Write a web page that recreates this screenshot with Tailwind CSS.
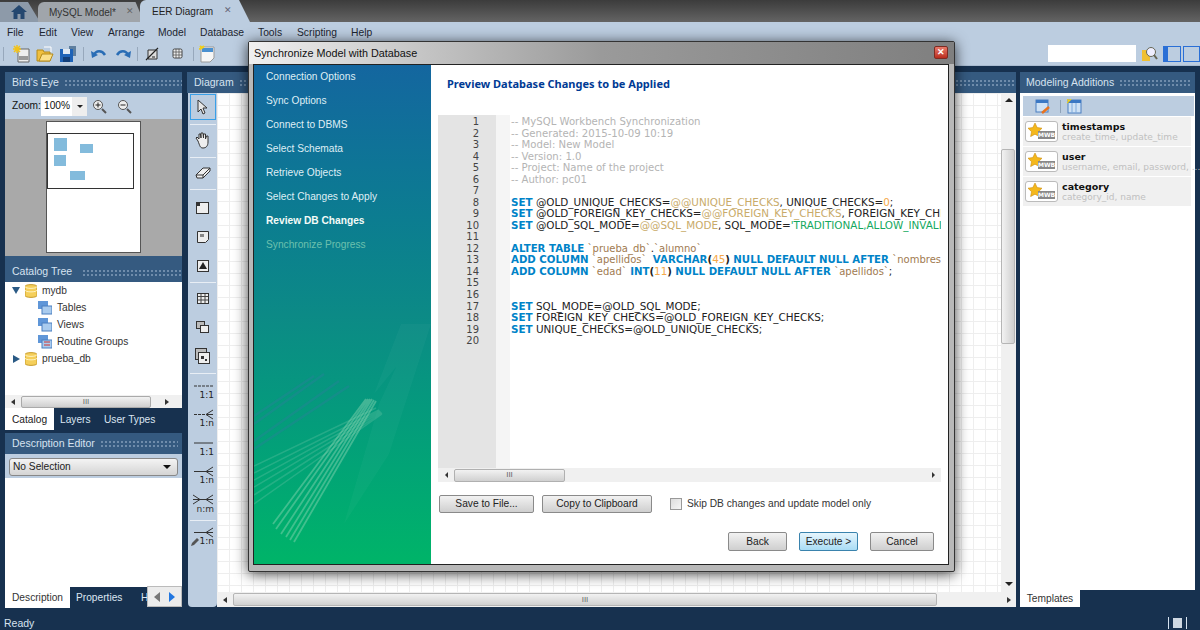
<!DOCTYPE html>
<html lang="en">
<head>
<meta charset="UTF-8">
<title>MySQL Workbench</title>
<script src="https://cdn.jsdelivr.net/npm/@tailwindcss/browser@4"></script>
</head>
<body class="w-[1200px] h-[630px] overflow-hidden bg-[#17314f] font-['Liberation_Sans',sans-serif] text-[10.200px] text-[#222]">

<!-- Document tabs -->
<div class="h-[22px] flex items-end bg-gradient-to-b from-[#3c3c3c] to-[#646464]">
  <div class="w-[40px] h-[20px] bg-[#8d9aa9] flex items-center pl-[11px] [clip-path:polygon(0_0,70%_0,100%_100%,0_100%)]">
    <svg width="16" height="14" viewBox="0 0 16 14"><path d="M8 0 0 7h2.500v7h4V9h3v5h4V7H16z" fill="#24476f"/></svg>
  </div>
  <div class="w-[106px] -ml-[2px] h-[20px] bg-[#a0a5ab] flex items-center pl-[11px] text-[10px] text-[#333] [clip-path:polygon(0_0,92%_0,100%_100%,0_100%)] rounded-tl-[6px]">
    <span class="w-[77px] whitespace-nowrap">MySQL Model*</span><span class="text-[#666] text-[9px]">✕</span>
  </div>
  <div class="w-[110px] -ml-[4px] h-[22px] bg-[#bccde0] flex items-center pl-[12px] text-[10px] text-[#222] [clip-path:polygon(0_0,90%_0,100%_100%,0_100%)] rounded-tl-[6px]">
    <span class="w-[72px] whitespace-nowrap">EER Diagram</span><span class="text-[#667] text-[9px]">✕</span>
  </div>
</div>

<!-- Menu bar -->
<div class="h-[20px] pt-px bg-[#bccde0] flex items-center pl-[7px] text-[10.300px] text-[#1c2530]">
  <span class="w-[32px]">File</span>
  <span class="w-[32px]">Edit</span>
  <span class="w-[37px]">View</span>
  <span class="w-[50px]">Arrange</span>
  <span class="w-[42px]">Model</span>
  <span class="w-[58px]">Database</span>
  <span class="w-[39px]">Tools</span>
  <span class="w-[54px]">Scripting</span>
  <span>Help</span>
</div>

<!-- Toolbar -->
<div class="h-[24px] bg-[#bccde0] flex items-center border-b border-[#a9bbd0] relative">
  <div class="ml-[3px] w-px h-[14px] bg-[#97a8bc]"></div>
  <svg class="ml-[9px]" width="18" height="18" viewBox="0 0 18 18"><path d="M5 4h11v13H5z" fill="#eee" stroke="#666"/><rect x="6" y="11" width="9" height="4" fill="#999"/><path d="M4 0v8M0 4h8M1 1l6 6M7 1 1 7" stroke="#f3c318" stroke-width="1.500"/></svg>
  <svg class="ml-[5px]" width="18" height="18" viewBox="0 0 18 18"><path d="M1 5h6l1 2h6v9H1z" fill="#f0c040" stroke="#b48a1a"/><path d="M3 16l3-7h11l-3 7z" fill="#fbe08a" stroke="#b48a1a"/><path d="M8 2h7v5" stroke="#fff" fill="none"/></svg>
  <svg class="ml-[5px]" width="18" height="18" viewBox="0 0 18 18"><path d="M1 4h13v13H1z" fill="#1e63b8"/><rect x="4" y="4" width="7" height="5" fill="#dfe9f4"/><rect x="4" y="12" width="7" height="5" fill="#123f7a"/><path d="M10 1h7v10h-3V4h-4z" fill="#5f7f9f"/></svg>
  <div class="ml-[6px] w-px h-[14px] bg-[#97a8bc]"></div>
  <svg class="ml-[7px]" width="16" height="14" viewBox="0 0 16 14"><path d="M3 8C5 3 11 3 14 8" fill="none" stroke="#2a6db5" stroke-width="2.500"/><path d="M0 4l1 7 6-3z" fill="#2a6db5"/></svg>
  <svg class="ml-[8px]" width="16" height="14" viewBox="0 0 16 14"><path d="M13 8C11 3 5 3 2 8" fill="none" stroke="#2a6db5" stroke-width="2.500"/><path d="M16 4l-1 7-6-3z" fill="#2a6db5"/></svg>
  <div class="ml-[6px] w-px h-[14px] bg-[#97a8bc]"></div>
  <svg class="ml-[7px]" width="14" height="14" viewBox="0 0 14 14"><path d="M3 3h9v9H3z" fill="#ddd" stroke="#333"/><path d="M1 13 13 1M7 10h3" stroke="#222" stroke-width="1.200"/></svg>
  <svg class="ml-[13px]" width="11" height="11" viewBox="0 0 11 11"><rect x="1" y="1" width="9" height="9" rx="1.500" fill="#eee" stroke="#444"/><path d="M4 1v9M7 1v9M1 4h9M1 7h9" stroke="#555" stroke-width=".8"/></svg>
  <div class="ml-[10px] w-px h-[14px] bg-[#97a8bc]"></div>
  <svg class="ml-[5px]" width="16" height="18" viewBox="0 0 16 18"><path d="M2 2h13v11l-4 4H2z" fill="#f6f6f6" stroke="#999"/><rect x="3" y="3" width="11" height="4" fill="#4a90d0"/><path d="M3 3 1 1M3 3l2-2M3 3 0 4" stroke="#f3d018" stroke-width="2"/></svg>
  <div class="ml-auto flex items-center">
    <div class="w-[88px] h-[17px] bg-white"></div>
    <svg class="ml-[6px]" width="16" height="16" viewBox="0 0 16 16"><path d="M0 4h8v11H0z" fill="#f0c030"/><circle cx="9" cy="6" r="4.500" fill="#eef" stroke="#665"/><path d="M12 9l3 4" stroke="#665" stroke-width="2"/></svg>
    <div class="ml-[5px] w-[18px] h-[16px] border border-[#2a6fd6] border-l-[5px]"></div>
    <div class="ml-[2px] w-[17px] h-[16px] border border-[#2a6fd6]"></div>
  </div>
</div>

<!-- Workspace -->
<div class="h-[542px] flex pt-[6px]">

  <!-- Left column -->
  <div class="ml-[5px] w-[177px] flex flex-col">
    <div class="h-[21px] bg-[#355a80] flex items-center pl-[7px] gap-[5px] text-[10.500px] text-[#d7e3f0]">
      <span>Bird's Eye</span>
      <div class="flex-1 h-[7px] bg-[radial-gradient(#6f8cab_1px,transparent_1px)] bg-size-[4px_4px]"></div>
    </div>
    <div class="h-[26px] bg-[#bccde0] flex items-center pl-[7px] text-[#111]">
      <span class="w-[29px]">Zoom:</span>
      <div class="w-[46px] h-[19px] bg-white flex items-center pl-[3px] justify-between">
        <span>100%</span>
        <div class="w-[15px] h-full bg-[#eee] flex items-center justify-center"><div class="border-x-[3px] border-t-[3px] border-x-transparent border-t-[#222]"></div></div>
      </div>
      <svg class="ml-[5px]" width="15" height="15" viewBox="0 0 15 15"><circle cx="6" cy="6" r="4.500" fill="#eee" stroke="#555"/><path d="M10 10l4 4" stroke="#555" stroke-width="2"/><path d="M3.500 6h5M6 3.500v5" stroke="#222"/></svg>
      <svg class="ml-[10px]" width="15" height="15" viewBox="0 0 15 15"><circle cx="6" cy="6" r="4.500" fill="#eee" stroke="#555"/><path d="M10 10l4 4" stroke="#555" stroke-width="2"/><path d="M3.500 6h5" stroke="#222"/></svg>
    </div>
    <div class="h-[137px] bg-[#a9a9a9] flex justify-center pt-[2px]">
      <div class="relative w-[95px] h-[132px] bg-white border border-[#555]">
        <div class="absolute left-0 top-[11px] w-[87px] h-[56px] border border-[#333]"></div>
        <div class="absolute left-[7px] top-[16px] w-[13px] h-[13px] bg-[#83bbdc]"></div>
        <div class="absolute left-[33px] top-[22px] w-[13px] h-[9px] bg-[#83bbdc]"></div>
        <div class="absolute left-[7px] top-[33px] w-[12px] h-[11px] bg-[#83bbdc]"></div>
        <div class="absolute left-[23px] top-[49px] w-[15px] h-[9px] bg-[#83bbdc]"></div>
      </div>
    </div>
    <div class="h-[26px] bg-[#355a80] flex items-center pl-[7px] pt-[6px] gap-[10px] text-[10.500px] text-[#d7e3f0]">
      <span>Catalog Tree</span>
      <div class="flex-1 h-[7px] bg-[radial-gradient(#6f8cab_1px,transparent_1px)] bg-size-[4px_4px]"></div>
    </div>
    <!-- Tree -->
    <div class="h-[113px] bg-white text-[#333]">
      <div class="h-[17px] flex items-center pl-[7px]">
        <div class="border-x-[4px] border-t-[7px] border-x-transparent border-t-[#2a5a85]"></div>
        <svg class="ml-[5px]" width="12" height="14" viewBox="0 0 12 14"><path d="M0 2.500C0 0 12 0 12 2.500v9c0 2.500-12 2.500-12 0z" fill="#f5cf5a" stroke="#c79b2a"/><path d="M0 2.500c0 2.500 12 2.500 12 0M0 6c0 2.500 12 2.500 12 0" fill="none" stroke="#fff3c0"/></svg>
        <span class="ml-[5px]">mydb</span>
      </div>
      <div class="h-[17px] flex items-center pl-[33px]">
        <svg width="14" height="14" viewBox="0 0 14 14"><rect x="0" y="0" width="10" height="8" fill="#5f96d8"/><rect x="4" y="5" width="10" height="8" fill="#a9cbee" stroke="#4a7fc0"/></svg>
        <span class="ml-[5px]">Tables</span>
      </div>
      <div class="h-[17px] flex items-center pl-[33px]">
        <svg width="14" height="14" viewBox="0 0 14 14"><rect x="0" y="0" width="10" height="8" fill="#5f96d8"/><rect x="4" y="5" width="10" height="8" fill="#a9cbee" stroke="#4a7fc0"/></svg>
        <span class="ml-[5px]">Views</span>
      </div>
      <div class="h-[17px] flex items-center pl-[33px]">
        <svg width="14" height="14" viewBox="0 0 14 14"><rect x="0" y="0" width="10" height="8" fill="#5f96d8"/><rect x="4" y="5" width="10" height="8" fill="#a9cbee" stroke="#4a7fc0"/><path d="M6 7h6M6 10h6" stroke="#c33"/></svg>
        <span class="ml-[5px]">Routine Groups</span>
      </div>
      <div class="h-[17px] flex items-center pl-[8px]">
        <div class="border-y-[4px] border-l-[7px] border-y-transparent border-l-[#2a5a85]"></div>
        <svg class="ml-[5px]" width="12" height="14" viewBox="0 0 12 14"><path d="M0 2.500C0 0 12 0 12 2.500v9c0 2.500-12 2.500-12 0z" fill="#f5cf5a" stroke="#c79b2a"/><path d="M0 2.500c0 2.500 12 2.500 12 0M0 6c0 2.500 12 2.500 12 0" fill="none" stroke="#fff3c0"/></svg>
        <span class="ml-[5px]">prueba_db</span>
      </div>
    </div>
    <div class="h-[13px] bg-[#f0f0f0] flex items-center">
      <div class="w-[16px] flex justify-center"><div class="border-y-[3px] border-r-[4px] border-y-transparent border-r-[#333]"></div></div>
      <div class="w-[130px] h-[12px] bg-gradient-to-b from-[#f2f2f2] to-[#cfcfcf] border border-[#aaa] rounded-[2px] flex items-center justify-center text-[8px] leading-none text-[#666]">III</div>
      <div class="flex-1 flex justify-center"><div class="border-y-[3px] border-l-[4px] border-y-transparent border-l-[#333]"></div></div>
    </div>
    <div class="h-[22px] flex items-center text-[#dbe6f2]">
      <span class="h-full w-[49px] pt-px bg-white text-[#222] flex items-center justify-center">Catalog</span>
      <span class="ml-[6px] w-[44px] pt-px">Layers</span>
      <span class="pt-px">User Types</span>
    </div>
    <div class="mt-[3px] h-[21px] bg-[#355a80] flex items-center pl-[7px] pr-[4px] gap-[5px] text-[10.500px] text-[#d7e3f0]">
      <span>Description Editor</span>
      <div class="flex-1 h-[7px] bg-[radial-gradient(#6f8cab_1px,transparent_1px)] bg-size-[4px_4px]"></div>
    </div>
    <div class="h-[24px] bg-[#bccde0] px-[4px] pt-[4px]">
      <div class="h-[18px] rounded-[3px] border border-[#888] bg-gradient-to-b from-[#f4f4f4] to-[#d4d4d4] flex items-center justify-between pl-[3px] pr-[6px] text-[#222]">
        <span>No Selection</span>
        <div class="border-x-[4px] border-t-[4px] border-x-transparent border-t-[#111]"></div>
      </div>
    </div>
    <div class="h-[109px] bg-white"></div>
    <div class="h-[21px] flex items-stretch relative text-[#dbe6f2]">
      <span class="w-[65px] bg-white text-[#333] flex items-center justify-center">Description</span>
      <span class="ml-[6px] w-[65px] flex items-center">Properties</span>
      <span class="flex items-center">H</span>
      <div class="absolute left-[142px] top-[-1px] w-[35px] h-[21px] bg-[#ececec] border border-[#bbb] flex items-center justify-center gap-[9px]">
        <div class="border-y-[5px] border-r-[6px] border-y-transparent border-r-[#777]"></div>
        <div class="border-y-[5px] border-l-[6px] border-y-transparent border-l-[#2277e0]"></div>
      </div>
    </div>
  </div>

  <!-- Diagram column -->
  <div class="ml-[5px] w-[829px] flex flex-col">
    <div class="h-[21px] bg-[#355a80] flex items-center pl-[7px] gap-[5px] text-[10.500px] text-[#d7e3f0]">
      <span>Diagram</span>
      <div class="flex-1 h-[7px] bg-[radial-gradient(#6f8cab_1px,transparent_1px)] bg-size-[4px_4px]"></div>
    </div>
    <div class="flex-1 flex">
      <!-- Tool strip -->
      <div class="w-[29px] h-[514px] ml-px bg-[#bccde0] rounded-b-[4px] flex flex-col items-center text-[9px] leading-[9px] font-['DejaVu_Sans',sans-serif] text-[#222]">
        <div class="mt-[1px] w-[26px] h-[26px] border border-[#3aa0e8] flex items-center justify-center">
          <svg width="12" height="16" viewBox="0 0 12 16"><path d="M1 1v12l3-3 2 5 2-1-2-5h4z" fill="#e8e8e8" stroke="#333"/></svg>
        </div>
        <div class="mt-[4px] w-[26px] h-[1px] bg-[#e8eef5]"></div>
        <svg class="mt-[7px]" width="16" height="18" viewBox="0 0 16 18"><path d="M3 9 1 6l1-1 2 2V2h1.500l.5 4V1h2l.5 5V2h2v5l1-3h1.500v6c0 4-2 6-5 6S5 14 3 9z" fill="#eee" stroke="#333"/></svg>
        <div class="mt-[7px] w-[26px] h-[1px] bg-[#e8eef5]"></div>
        <svg class="mt-[9px]" width="16" height="12" viewBox="0 0 16 12"><path d="M1 8 8 1h7v3l-7 7H2z" fill="#eee" stroke="#333"/><path d="M1 8h7l7-7M8 8v3" stroke="#333" fill="none"/></svg>
        <div class="mt-[10px] w-[26px] h-[1px] bg-[#e8eef5]"></div>
        <svg class="mt-[12px]" width="13" height="12" viewBox="0 0 13 12"><rect x=".5" y=".5" width="12" height="11" fill="#eee" stroke="#333"/><path d="M1 1h3v3H1z" fill="#333"/></svg>
        <svg class="mt-[17px]" width="12" height="12" viewBox="0 0 12 12"><path d="M.5.5h11v8l-3 3h-8z" fill="#eee" stroke="#333"/><path d="M4 3v3M6 3v3" stroke="#222"/></svg>
        <svg class="mt-[17px]" width="12" height="12" viewBox="0 0 12 12"><rect x=".5" y=".5" width="11" height="11" fill="#eee" stroke="#333"/><path d="M2 9l4-7 4 7z" fill="#222"/></svg>
        <div class="mt-[10px] w-[26px] h-[1px] bg-[#e8eef5]"></div>
        <svg class="mt-[10px]" width="12" height="11" viewBox="0 0 12 11"><rect x=".5" y=".5" width="11" height="10" fill="#eee" stroke="#333"/><path d="M1 3.500h10M1 7h10M4 1v9M8 1v9" stroke="#444"/></svg>
        <svg class="mt-[17px]" width="13" height="12" viewBox="0 0 13 12"><rect x=".5" y=".5" width="8" height="7" fill="#bbb" stroke="#333"/><rect x="4.500" y="4.500" width="8" height="7" fill="#eee" stroke="#333"/></svg>
        <svg class="mt-[15px]" width="15" height="16" viewBox="0 0 15 16"><rect x=".5" y=".5" width="11" height="11" fill="#bbb" stroke="#333"/><rect x="3.500" y="4.500" width="11" height="11" fill="#eee" stroke="#333"/><path d="M6 8h3v3H6zM10 11h2v2h-2z" fill="#333"/></svg>
        <div class="mt-[9px] w-[26px] h-[1px] bg-[#e8eef5]"></div>
        <!-- Relationship tools -->
        <svg class="mt-[11px]" width="22" height="3" viewBox="0 0 22 3"><path d="M2 1h19" stroke="#333" stroke-dasharray="3 1"/></svg>
        <span class="self-end mr-[3px] mt-[3px]">1:1</span>
        <svg class="mt-[9px]" width="22" height="11" viewBox="0 0 22 11"><path d="M2 5.500h12" stroke="#333" stroke-dasharray="3 1"/><path d="M14 5.500 21 1M14 5.500H21M14 5.500l7 4.500" stroke="#333" fill="none"/></svg>
        <span class="self-end mr-[3px] -mt-[1px]">1:n</span>
        <svg class="mt-[14px]" width="22" height="2" viewBox="0 0 22 2"><path d="M2 1h19" stroke="#333"/></svg>
        <span class="self-end mr-[3px] mt-[4px]">1:1</span>
        <svg class="mt-[9px]" width="22" height="11" viewBox="0 0 22 11"><path d="M2 5.500h12" stroke="#333"/><path d="M14 5.500 21 1M14 5.500H21M14 5.500l7 4.500" stroke="#333" fill="none"/></svg>
        <span class="self-end mr-[3px] -mt-[1px]">1:n</span>
        <svg class="mt-[9px]" width="22" height="11" viewBox="0 0 22 11"><path d="M8 5.500h6M1 1l7 4.500L1 10M14 5.500 21 1M14 5.500l7 4.500M1 5.500h7M14 5.500h7" stroke="#333" fill="none"/></svg>
        <span class="self-end mr-[3px] text-[#333]">n:m</span>
        <div class="mt-[6px] w-[26px] h-[1px] bg-[#e8eef5]"></div>
        <svg class="mt-[6px]" width="22" height="11" viewBox="0 0 22 11"><path d="M2 5.500h12" stroke="#333"/><path d="M14 5.500 21 1M14 5.500H21M14 5.500l7 4.500" stroke="#333" fill="none"/></svg>
        <div class="self-stretch flex items-center justify-end pr-[3px] -mt-[1px]">
          <svg width="9" height="9" viewBox="0 0 9 9"><path d="M0 9l1-3 5-5 2 2-5 5z" fill="#555"/></svg>
          <span>1:n</span>
        </div>
      </div>
      <!-- Canvas -->
      <div class="flex-1 flex flex-col">
        <div class="h-[499px] flex">
          <div class="flex-1 bg-white bg-[linear-gradient(#eeeeee_1px,transparent_1px),linear-gradient(90deg,#eeeeee_1px,transparent_1px)] bg-size-[12px_12px]"></div>
          <div class="w-[15px] bg-[#f0f0f0] relative">
            <div class="absolute left-[4px] top-[5px] border-x-[4px] border-b-[4px] border-x-transparent border-b-[#222]"></div>
            <div class="absolute left-0 top-[56px] w-[14px] h-[195px] bg-gradient-to-r from-[#f2f2f2] to-[#cfcfcf] border border-[#b5b5b5] rounded-[2px]"></div>
            <div class="absolute left-[4px] top-[489px] border-x-[4px] border-t-[4px] border-x-transparent border-t-[#222]"></div>
          </div>
        </div>
        <div class="h-[15px] bg-[#f0f0f0] flex items-center">
          <div class="w-[16px] flex justify-center"><div class="border-y-[3px] border-r-[4px] border-y-transparent border-r-[#333]"></div></div>
          <div class="w-[704px] h-[13px] bg-gradient-to-b from-[#f2f2f2] to-[#d0d0d0] border border-[#b5b5b5] rounded-[2px] flex items-center justify-center text-[8px] leading-none text-[#666]">III</div>
          <div class="ml-auto w-[14px] flex justify-center"><div class="border-y-[3px] border-l-[4px] border-y-transparent border-l-[#333]"></div></div>
        </div>
      </div>
    </div>
  </div>

  <!-- Right column -->
  <div class="ml-[4px] w-[175px] flex flex-col">
    <div class="h-[21px] bg-[#355a80] flex items-center pl-[6px] pr-[4px] gap-[5px] text-[10.500px] text-[#d7e3f0]">
      <span>Modeling Additions</span>
      <div class="flex-1 h-[7px] bg-[radial-gradient(#6f8cab_1px,transparent_1px)] bg-size-[4px_4px]"></div>
    </div>
    <div class="h-[497px] bg-white pt-[3px] pl-[3px] pr-[1px]">
      <div class="h-[20px] bg-[#bccde0] flex items-center pl-[12px]">
        <svg width="16" height="15" viewBox="0 0 16 15"><rect x="1" y="1" width="12" height="12" fill="#cfe2f5" stroke="#4a7fc0"/><rect x="1" y="1" width="12" height="3" fill="#3b78c4"/><path d="M7 14l7-6" stroke="#e8731f" stroke-width="2.500"/></svg>
        <div class="ml-[9px] w-px h-[13px] bg-[#8fa3b9]"></div>
        <svg class="ml-[6px]" width="15" height="15" viewBox="0 0 15 15"><rect x="1" y="1" width="13" height="13" fill="#cfe2f5" stroke="#4a7fc0"/><rect x="1" y="1" width="13" height="3" fill="#3b78c4"/><path d="M5 4v10M9 4v10" stroke="#7faadb"/><path d="M2 2 0 0M2 2l2-2M2 2 0 4" stroke="#f3d018" stroke-width="1.500"/></svg>
      </div>
      <div class="mr-[3px] mt-[1px] h-[29px] bg-[#f0f0f0] flex items-center pl-[2px] mb-px">
        <div class="w-[33px] h-[21px] bg-white border border-[#bbb] rounded-[3px] relative shrink-0">
          <svg class="absolute left-[2px] top-[1px]" width="14" height="14" viewBox="0 0 24 24"><path d="M12 0l3.700 7.800 8.300 1.100-6 5.900 1.500 8.500L12 19.200 4.500 23.300 6 14.800 0 8.900l8.300-1.100z" fill="#f4b81c" stroke="#c98c10"/></svg>
          <span class="absolute right-[2px] bottom-[2px] w-[17px] h-[8px] bg-[#888] text-white text-[6px] leading-[8px] font-bold text-center font-['DejaVu_Sans',sans-serif]">MWB</span>
        </div>
        <div class="ml-[4px] flex flex-col leading-[10px] font-['DejaVu_Sans',sans-serif]">
          <span class="font-bold text-[9.500px] text-[#111]">timestamps</span>
          <span class="text-[9px] text-[#c0c0c0] whitespace-nowrap">create_time, update_time</span>
        </div>
      </div>
      <div class="mr-[3px] h-[29px] bg-[#f0f0f0] flex items-center pl-[2px] mb-px">
        <div class="w-[33px] h-[21px] bg-white border border-[#bbb] rounded-[3px] relative shrink-0">
          <svg class="absolute left-[2px] top-[1px]" width="14" height="14" viewBox="0 0 24 24"><path d="M12 0l3.700 7.800 8.300 1.100-6 5.900 1.500 8.500L12 19.200 4.500 23.300 6 14.800 0 8.900l8.300-1.100z" fill="#f4b81c" stroke="#c98c10"/></svg>
          <span class="absolute right-[2px] bottom-[2px] w-[17px] h-[8px] bg-[#888] text-white text-[6px] leading-[8px] font-bold text-center font-['DejaVu_Sans',sans-serif]">MWB</span>
        </div>
        <div class="ml-[4px] flex flex-col leading-[10px] font-['DejaVu_Sans',sans-serif]">
          <span class="font-bold text-[9.500px] text-[#111]">user</span>
          <span class="text-[9px] text-[#c0c0c0] whitespace-nowrap">username, email, password, ...</span>
        </div>
      </div>
      <div class="mr-[3px] h-[29px] bg-[#f0f0f0] flex items-center pl-[2px]">
        <div class="w-[33px] h-[21px] bg-white border border-[#bbb] rounded-[3px] relative shrink-0">
          <svg class="absolute left-[2px] top-[1px]" width="14" height="14" viewBox="0 0 24 24"><path d="M12 0l3.700 7.800 8.300 1.100-6 5.900 1.500 8.500L12 19.200 4.500 23.300 6 14.800 0 8.900l8.300-1.100z" fill="#f4b81c" stroke="#c98c10"/></svg>
          <span class="absolute right-[2px] bottom-[2px] w-[17px] h-[8px] bg-[#888] text-white text-[6px] leading-[8px] font-bold text-center font-['DejaVu_Sans',sans-serif]">MWB</span>
        </div>
        <div class="ml-[4px] flex flex-col leading-[10px] font-['DejaVu_Sans',sans-serif]">
          <span class="font-bold text-[9.500px] text-[#111]">category</span>
          <span class="text-[9px] text-[#c0c0c0] whitespace-nowrap">category_id, name</span>
        </div>
      </div>
    </div>
    <div class="h-[17px] w-[60px] pt-px bg-white text-[#333] flex items-center justify-center">Templates</div>
  </div>
</div>

<!-- Status bar -->
<div class="h-[22px] flex items-center pl-[4px] pt-[9px] text-[#d7e3f0] text-[10.500px] relative">
  <span>Ready</span>
  <div class="absolute left-[1168px] top-[9px] flex items-center gap-[4px]">
    <div class="w-px h-[12px] bg-[#d7e3f0]"></div>
    <div class="w-[9px] h-[10px] bg-[#cfd8e2]"></div>
    <div class="w-px h-[12px] bg-[#d7e3f0]"></div>
  </div>
</div>

<!-- Dialog -->
<div class="absolute left-[248px] top-[41px] w-[707px] h-[531px] flex flex-col bg-[#b8b8b8] border border-[#333] shadow-[0_2px_14px_rgba(0,0,0,0.75)] rounded-[2px] pl-[4px] pr-[5px] pb-[6px]">
  <div class="-ml-[4px] -mr-[5px] h-[22px] shrink-0 bg-gradient-to-r from-[#f0f0f0] via-[#9a9a9a] to-[#7f7f7f] flex items-center pl-[5px] text-[10.800px] text-[#111] relative">
    <span>Synchronize Model with Database</span>
    <div class="absolute right-[6px] top-[4px] w-[14px] h-[13px] rounded-[2px] bg-gradient-to-b from-[#e8796a] to-[#b92b1c] border border-[#7d2b22] flex items-center justify-center text-white text-[9px] leading-none font-bold">✕</div>
  </div>
  <div class="flex-1 flex border border-[#222] min-h-0 bg-white">
    <!-- Steps sidebar -->
    <div class="relative w-[177px] shrink-0 overflow-hidden bg-gradient-to-b from-[#14669f] via-[#0c8a86] via-50% to-[#00b468] text-[#dfeef5]">
      <svg class="absolute left-0 bottom-0" width="177" height="240" viewBox="0 0 177 240">
        <path d="M120 70 177 0h-30zM125 80 90 200l45-70 42-130h-15z" fill="#ffffff" opacity=".03"/>
        <path d="M0 117 85 57M0 125 95 62M0 100 70 50M0 92 60 52" stroke="#2a7f9a" stroke-width="2.500" opacity=".4" fill="none"/>
        <path d="M0 142 122 84M0 149 125 86M0 156 126 87M0 163 127 88M0 171 128 89M0 180 128 90" stroke="#64c2a2" stroke-width="1.500" opacity=".35" fill="none"/>
        <path d="M19 200 112 75M22 205 114 75M27 210 116 75M32 213 118 75M36 216 120 76M40 218 122 77" stroke="#8fd8b4" stroke-width="1.800" opacity=".45" fill="none"/>
      </svg>
      <div class="relative flex flex-col pl-[12px]">
        <span class="h-[24px] flex items-center">Connection Options</span>
        <span class="h-[24px] flex items-center">Sync Options</span>
        <span class="h-[24px] flex items-center">Connect to DBMS</span>
        <span class="h-[24px] flex items-center">Select Schemata</span>
        <span class="h-[24px] flex items-center">Retrieve Objects</span>
        <span class="h-[24px] flex items-center">Select Changes to Apply</span>
        <span class="h-[24px] flex items-center font-bold text-[#f4fbf8]">Review DB Changes</span>
        <span class="h-[24px] flex items-center text-[#6cc0ad]">Synchronize Progress</span>
      </div>
    </div>
    <!-- Page -->
    <div class="flex-1 min-w-0 flex flex-col pl-[7px] pr-[7px]">
      <h1 class="pl-[9px] pt-[11px] h-[50px] text-[#003a94] font-bold text-[11px] font-['Noto_Sans',sans-serif] shrink-0">Preview Database Changes to be Applied</h1>
      <div class="h-[353px] flex shrink-0 overflow-hidden">
        <div class="w-[58px] bg-[#e4e4e4] shrink-0 pt-px pr-[17px] text-right font-['DejaVu_Sans',sans-serif] text-[10px] leading-[11.530px] text-[#444]">
          1<br>2<br>3<br>4<br>5<br>6<br>7<br>8<br>9<br>10<br>11<br>12<br>13<br>14<br>15<br>16<br>17<br>18<br>19<br>20
        </div>
        <div class="w-[14px] bg-[#f5f5f5] shrink-0"></div>
        <pre class="flex-1 pl-px pt-px overflow-hidden font-['DejaVu_Sans',sans-serif] text-[10.400px] leading-[11.530px] text-[#222]"><span class="text-[#b4b4b4] text-[10.150px]">-- MySQL Workbench Synchronization
-- Generated: 2015-10-09 10:19
-- Model: New Model
-- Version: 1.0
-- Project: Name of the project
-- Author: pc01</span>

<b class="text-[#0083c8]">SET</b> @OLD_UNIQUE_CHECKS=<span class="text-[#c9ab6a]">@@UNIQUE_CHECKS</span>, UNIQUE_CHECKS=<span class="text-[#f5a94a]">0</span>;
<b class="text-[#0083c8]">SET</b> @OLD_FOREIGN_KEY_CHECKS=<span class="text-[#c9ab6a]">@@FOREIGN_KEY_CHECKS</span>, FOREIGN_KEY_CHECKS=0;
<b class="text-[#0083c8]">SET</b> @OLD_SQL_MODE=<span class="text-[#c9ab6a]">@@SQL_MODE</span>, SQL_MODE=<span class="text-[#14a860]">'TRADITIONAL,ALLOW_INVALID_DATES'</span>;

<b class="text-[#0083c8] text-[10.200px]">ALTER TABLE</b> <span class="text-[#a07a50] text-[10px]">`prueba_db`</span>.<span class="text-[#a07a50] text-[10px]">`alumno`</span>
<b class="text-[#0083c8] text-[10.200px]">ADD COLUMN</b> <span class="text-[#a07a50] text-[10px]">`apellidos`</span> <b class="ml-[3px] text-[#0083c8] text-[10.200px]">VARCHAR</b><b class="text-[10.200px]">(</b><span class="text-[#f5a94a]">45</span><b class="text-[10.200px]">)</b> <b class="text-[#0083c8] text-[10.200px]">NULL DEFAULT NULL AFTER</b> <span class="text-[#a07a50] text-[10px]">`nombres`</span>
<b class="text-[#0083c8] text-[10.200px]">ADD COLUMN</b> <span class="text-[#a07a50] text-[10px]">`edad`</span> <b class="text-[#0083c8] text-[10.200px]">INT</b><b class="text-[10.200px]">(</b><span class="text-[#f5a94a]">11</span><b class="text-[10.200px]">)</b> <b class="text-[#0083c8] text-[10.200px]">NULL DEFAULT NULL AFTER</b> <span class="text-[#a07a50] text-[10px]">`apellidos`</span>;


<b class="text-[#0083c8]">SET</b> SQL_MODE=@OLD_SQL_MODE;
<b class="text-[#0083c8]">SET</b> FOREIGN_KEY_CHECKS=@OLD_FOREIGN_KEY_CHECKS;
<b class="text-[#0083c8]">SET</b> UNIQUE_CHECKS=@OLD_UNIQUE_CHECKS;</pre>
      </div>
      <div class="h-[14px] bg-[#f0f0f0] shrink-0 flex items-center">
        <div class="w-[16px] flex justify-center"><div class="border-y-[3px] border-r-[3px] border-y-transparent border-r-[#333]"></div></div>
        <div class="w-[111px] h-[13px] bg-gradient-to-b from-[#f2f2f2] to-[#d0d0d0] border border-[#b0b0b0] rounded-[2px] flex items-center justify-center text-[8px] leading-none text-[#666]">III</div>
        <div class="ml-auto w-[16px] flex justify-center"><div class="border-y-[3px] border-l-[3px] border-y-transparent border-l-[#333]"></div></div>
      </div>
      <div class="mt-[13px] pl-px flex items-center shrink-0">
        <button class="w-[95px] h-[18px] border border-[#8a8a8a] rounded-[2px] bg-gradient-to-b from-[#f2f2f2] to-[#cfcfcf] text-[#222]">Save to File...</button>
        <button class="ml-[8px] w-[110px] h-[18px] border border-[#8a8a8a] rounded-[2px] bg-gradient-to-b from-[#f2f2f2] to-[#cfcfcf] text-[#222]">Copy to Clipboard</button>
        <div class="ml-[18px] w-[12px] h-[12px] border border-[#999] bg-gradient-to-br from-[#ddd] to-[#f6f6f6]"></div>
        <span class="ml-[5px] text-[#333]">Skip DB changes and update model only</span>
      </div>
      <div class="mt-[19px] pr-[7px] flex justify-end gap-[12px] shrink-0">
        <button class="w-[59px] h-[19px] border border-[#8a8a8a] rounded-[2px] bg-gradient-to-b from-[#f2f2f2] to-[#cfcfcf] text-[#222]">Back</button>
        <button class="w-[59px] h-[19px] border border-[#3a83ad] rounded-[2px] bg-gradient-to-b from-[#e6f5fc] to-[#a9dcf5] text-[#222]">Execute &gt;</button>
        <button class="w-[64px] h-[19px] border border-[#8a8a8a] rounded-[2px] bg-gradient-to-b from-[#f2f2f2] to-[#cfcfcf] text-[#222]">Cancel</button>
      </div>
    </div>
  </div>
</div>

</body>
</html>
